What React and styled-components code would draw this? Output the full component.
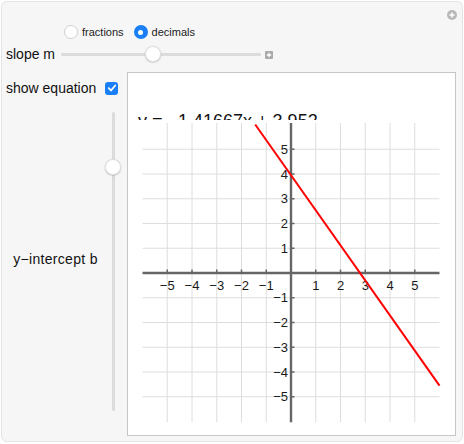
import React from "react";
import styled, { createGlobalStyle } from "styled-components";

const GlobalStyle = createGlobalStyle`
  html, body {
    margin: 0;
    padding: 0;
    background: #ffffff;
  }
  body {
    font-family: "Liberation Sans", Arial, sans-serif;
    color: #1a1a1a;
  }
`;

const UNIT = 24.75;
const ORIGIN = { x: 163, y: 153 };
const SLOPE = -1.41667;
const INTERCEPT = 3.952;
const TICKS = [-5, -4, -3, -2, -1, 1, 2, 3, 4, 5];

const px = (u) => ORIGIN.x + u * UNIT;
const py = (u) => ORIGIN.y - u * UNIT;

const Plot = () => {
  const xStart = (6 - INTERCEPT) / SLOPE;
  const yEnd = SLOPE * 6 + INTERCEPT;
  const left = px(-6);
  const right = px(6);
  const top = py(6.06);
  const bottom = py(-6.03);
  return (
    <PlotSvg width="327" height="315" viewBox="0 0 327 315">
      {TICKS.map((i) => (
        <g key={i}>
          <line x1={px(i)} y1={top} x2={px(i)} y2={bottom} stroke="#dedede" strokeWidth="1" />
          <line x1={left} y1={py(i)} x2={right} y2={py(i)} stroke="#dedede" strokeWidth="1" />
        </g>
      ))}
      <line x1={left} y1={ORIGIN.y} x2={right} y2={ORIGIN.y} stroke="#666" strokeWidth="2.4" />
      <line x1={ORIGIN.x} y1={top} x2={ORIGIN.x} y2={bottom} stroke="#666" strokeWidth="2.4" />
      {TICKS.map((i) => (
        <g key={"t" + i}>
          <line x1={px(i)} y1={ORIGIN.y} x2={px(i)} y2={ORIGIN.y - 3.5} stroke="#666" strokeWidth="1.5" />
          <line x1={ORIGIN.x} y1={py(i)} x2={ORIGIN.x + 3.5} y2={py(i)} stroke="#666" strokeWidth="1.5" />
          <TickText x={px(i)} y={ORIGIN.y + 16.5} textAnchor="middle">
            {i < 0 ? "\u2212" + Math.abs(i) : i}
          </TickText>
          <TickText x={ORIGIN.x - 3} y={py(i) + 4.6} textAnchor="end">
            {i < 0 ? "\u2212" + Math.abs(i) : i}
          </TickText>
        </g>
      ))}
      <line x1={px(xStart)} y1={py(6)} x2={px(6)} y2={py(yEnd)} stroke="#ff0000" strokeWidth="2" />
    </PlotSvg>
  );
};

const App = () => {
  return (
    <>
      <GlobalStyle />
      <Panel>
        <CornerButton>
          <svg width="10" height="10" viewBox="0 0 10 10">
            <circle cx="5" cy="5" r="5" fill="#b8b8b8" />
            <path d="M5 2.4v5.2M2.4 5h5.2" stroke="#fff" strokeWidth="1.6" />
          </svg>
        </CornerButton>

        <RadioRow>
          <RadioOption>
            <RadioCircle />
            <RadioLabel>fractions</RadioLabel>
          </RadioOption>
          <RadioOption>
            <RadioCircle $checked />
            <RadioLabel>decimals</RadioLabel>
          </RadioOption>
        </RadioRow>

        <SlopeRow>
          <ControlLabel>slope m</ControlLabel>
          <HTrack>
            <Thumb style={{ left: "46%" }} />
          </HTrack>
          <PlusBox>
            <svg width="8" height="8" viewBox="0 0 8 8">
              <rect width="8" height="8" rx="1" fill="#a9a9a9" />
              <path d="M4 1.8v4.4M1.8 4h4.4" stroke="#fff" strokeWidth="1.3" />
            </svg>
          </PlusBox>
        </SlopeRow>

        <Main>
          <LeftColumn>
            <CheckRow>
              <ControlLabel>show equation</ControlLabel>
              <CheckBox>
                <svg width="10" height="10" viewBox="0 0 10 10">
                  <path d="M1.8 5.2l2.2 2.3 4.2-5" fill="none" stroke="#fff" strokeWidth="1.8" strokeLinecap="round" strokeLinejoin="round" />
                </svg>
              </CheckBox>
            </CheckRow>
            <InterceptRow>
              <InterceptLabel>y&#8722;intercept b</InterceptLabel>
              <VSliderCell>
                <VTrack>
                  <Thumb $vertical style={{ top: "55px" }} />
                </VTrack>
              </VSliderCell>
            </InterceptRow>
          </LeftColumn>

          <PlotBox>
            <EquationClip>
              <Equation>y = &#8722;1.41667x + 3.952</Equation>
            </EquationClip>
            <Plot />
          </PlotBox>
        </Main>
      </Panel>
    </>
  );
};

const Panel = styled.div`
  position: relative;
  margin: 1px;
  width: 462px;
  height: 441px;
  box-sizing: border-box;
  border: 1px solid #e4e4e4;
  border-radius: 6px;
  background: #f6f6f6;
  overflow: hidden;
`;

const CornerButton = styled.div`
  position: absolute;
  top: 8px;
  right: 5px;
  width: 10px;
  height: 10px;
  display: flex;
`;

const RadioRow = styled.div`
  display: flex;
  align-items: center;
  gap: 10px;
  height: 14px;
  margin-top: 23px;
  padding-left: 62px;
`;

const RadioOption = styled.div`
  display: flex;
  align-items: center;
  gap: 4px;
`;

const RadioCircle = styled.span`
  box-sizing: border-box;
  width: 14px;
  height: 14px;
  border-radius: 50%;
  background: ${(p) => (p.$checked ? "#1a7ff7" : "#ffffff")};
  border: ${(p) => (p.$checked ? "none" : "1px solid #cfcfcf")};
  display: flex;
  align-items: center;
  justify-content: center;
  &::after {
    content: "";
    display: ${(p) => (p.$checked ? "block" : "none")};
    width: 5px;
    height: 5px;
    border-radius: 50%;
    background: #ffffff;
  }
`;

const RadioLabel = styled.span`
  font-size: 11px;
  color: #222;
`;

const SlopeRow = styled.div`
  display: flex;
  align-items: center;
  height: 16px;
  margin-top: 7px;
  padding-left: 4px;
`;

const ControlLabel = styled.span`
  font-size: 14px;
  color: #111;
  white-space: nowrap;
`;

const HTrack = styled.div`
  position: relative;
  width: 200px;
  height: 3px;
  margin-left: 6px;
  border-radius: 2px;
  background: #dcdcdc;
`;

const Thumb = styled.span`
  position: absolute;
  box-sizing: border-box;
  width: 16px;
  height: 16px;
  border-radius: 50%;
  background: #ffffff;
  border: 1px solid #e2e2e2;
  box-shadow: 0 0.5px 1.5px rgba(0, 0, 0, 0.25);
  ${(p) =>
    p.$vertical
      ? "left: 50%; transform: translate(-50%, -50%);"
      : "top: 50%; transform: translate(-50%, -50%);"}
`;

const PlusBox = styled.span`
  display: flex;
  margin-left: 4px;
  margin-top: 1px;
`;

const Main = styled.div`
  display: flex;
  margin-top: 10px;
  height: 364px;
`;

const LeftColumn = styled.div`
  width: 125px;
  box-sizing: border-box;
  padding-left: 4px;
  display: flex;
  flex-direction: column;
`;

const CheckRow = styled.div`
  display: flex;
  align-items: center;
  gap: 9px;
  height: 16px;
  margin-top: 8px;
`;

const CheckBox = styled.span`
  width: 13px;
  height: 13px;
  border-radius: 3px;
  background: #1a7ff7;
  display: flex;
  align-items: center;
  justify-content: center;
`;

const InterceptRow = styled.div`
  display: flex;
  margin-top: 16px;
  height: 299px;
`;

const InterceptLabel = styled.div`
  flex: 1;
  display: flex;
  align-items: center;
  justify-content: center;
  font-size: 14px;
  letter-spacing: 0.3px;
  color: #111;
  padding-bottom: 6px;
`;

const VSliderCell = styled.div`
  width: 16px;
  margin-right: 6px;
  display: flex;
  justify-content: center;
`;

const VTrack = styled.div`
  position: relative;
  width: 3px;
  height: 100%;
  border-radius: 2px;
  background: #dcdcdc;
`;

const PlotBox = styled.div`
  width: 329px;
  height: 364px;
  box-sizing: border-box;
  border: 1px solid #c6c6c6;
  background: #ffffff;
  display: flex;
  flex-direction: column;
`;

const EquationClip = styled.div`
  height: 47px;
  box-sizing: border-box;
  padding-top: 39px;
  padding-left: 10px;
  overflow: hidden;
`;

const Equation = styled.div`
  font-size: 18px;
  line-height: 18px;
  color: #111;
  white-space: nowrap;
`;

const PlotSvg = styled.svg`
  display: block;
`;

const TickText = styled.text`
  font-family: "Liberation Sans", Arial, sans-serif;
  font-size: 13px;
  fill: #1a1a1a;
`;

export default App;
